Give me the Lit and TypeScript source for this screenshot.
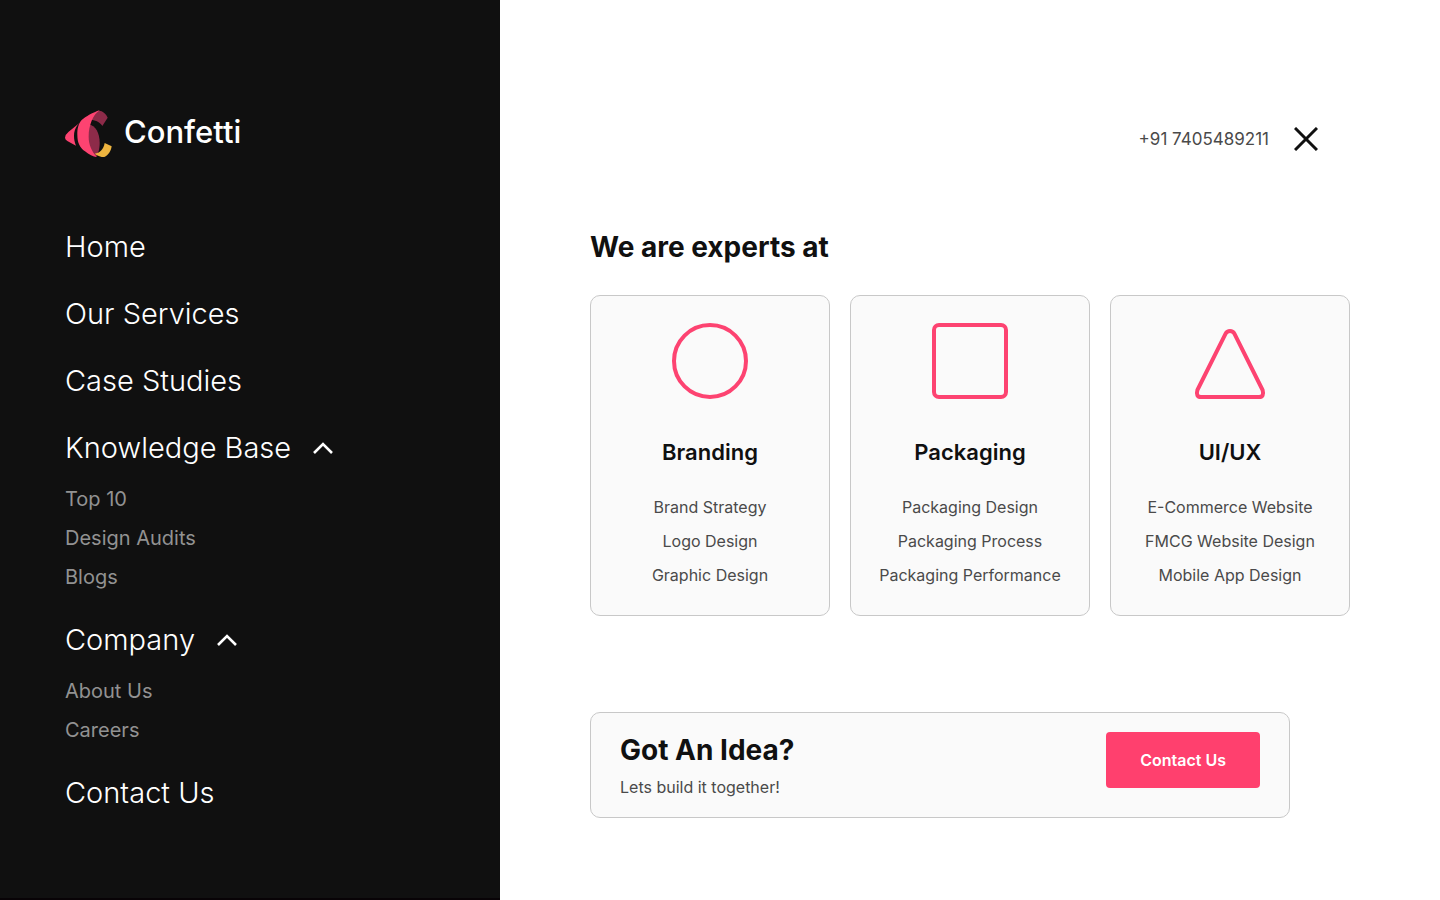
import { LitElement, html, css, svg, nothing } from "lit";
import { customElement, property, state } from "lit/decorators.js";

interface NavEntry {
  label: string;
  children?: string[];
}

const NAV: NavEntry[] = [
  { label: "Home" },
  { label: "Our Services" },
  { label: "Case Studies" },
  { label: "Knowledge Base", children: ["Top 10", "Design Audits", "Blogs"] },
  { label: "Company", children: ["About Us", "Careers"] },
  { label: "Contact Us" },
];

const SERVICES = [
  { shape: "circle", title: "Branding", items: ["Brand Strategy", "Logo Design", "Graphic Design"] },
  { shape: "square", title: "Packaging", items: ["Packaging Design", "Packaging Process", "Packaging Performance"] },
  { shape: "triangle", title: "UI/UX", items: ["E-Commerce Website", "FMCG Website Design", "Mobile App Design"] },
];

@customElement("confetti-logo")
class ConfettiLogo extends LitElement {
  static styles = css`
    :host { display: block; }
    .logo {
      display: flex;
      align-items: center;
      gap: 12px;
      color: #fff;
      text-decoration: none;
    }
    .mark { display: block; width: 47px; height: 47px; }
    .word { padding-bottom: 3px; font-size: 31px; line-height: 44px; font-weight: 500; }
  `;

  render() {
    return html`
      <a class="logo" href="#">
        <svg class="mark" viewBox="0 0 141 141" aria-hidden="true">
          <path fill="#fd4371" d="M0 83Q1 73 11 65L58 27C44 36 27 52 27 78C27 88 29 97 33 107L7 93Q0 89 0 83Z"/>
          <path fill="#8d2b49" d="M70 43C92 46 104 70 104 98C104 116 100 132 92 141C78 130 70 110 68 86Z"/>
          <path fill="#8d2b49" d="M98 3Q104 1 110 4C118 8 125 15 128 23L112 48C106 38 94 30 76 30Z"/>
          <path fill="#fd4371" d="M104 1C84 7 62 20 50 30C40 41 37 56 37 74C37 98 44 112 60 124C72 134 84 141 96 141C80 124 71 104 71 80C71 46 84 14 104 1Z"/>
          <path fill="#edb43f" d="M119 99L140 109C138 123 130 136 118 141C108 141 98 138 89 131C104 130 116 118 119 99Z"/>
        </svg>
        <span class="word">Confetti</span>
      </a>
    `;
  }
}

@customElement("side-nav")
class SideNav extends LitElement {
  @state() private closed: string[] = [];

  static styles = css`
    :host { display: block; }
    .list {
      display: flex;
      flex-direction: column;
      gap: 30px;
      margin: 0;
      padding: 0;
      list-style: none;
    }
    .main {
      display: flex;
      align-items: center;
      gap: 22px;
      width: fit-content;
      padding: 0;
      border: 0;
      background: none;
      font: 300 29px/37px Inter, "Liberation Sans", sans-serif;
      color: #fff;
      text-decoration: none;
      cursor: pointer;
    }
    .chevron { display: block; width: 20px; height: 12px; }
    .chevron.down { rotate: 180deg; }
    .sub {
      display: flex;
      flex-direction: column;
      gap: 11px;
      margin: 19px 0 0;
      padding: 0;
      list-style: none;
    }
    .sub-link {
      display: block;
      width: fit-content;
      font-size: 20px;
      line-height: 28px;
      font-weight: 400;
      color: #929292;
      text-decoration: none;
    }
  `;

  private toggle(label: string) {
    this.closed = this.closed.includes(label)
      ? this.closed.filter((l) => l !== label)
      : [...this.closed, label];
  }

  private renderEntry(entry: NavEntry) {
    if (!entry.children) {
      return html`<li><a class="main" href="#">${entry.label}</a></li>`;
    }
    const open = !this.closed.includes(entry.label);
    return html`
      <li>
        <button class="main" type="button" aria-expanded=${open} @click=${() => this.toggle(entry.label)}>
          ${entry.label}
          <svg class="chevron ${open ? "" : "down"}" viewBox="0 0 20 12" fill="none" stroke="#fff" stroke-width="2.6" aria-hidden="true">
            <path d="M1 11 10 2 19 11"/>
          </svg>
        </button>
        ${open
          ? html`<ul class="sub">
              ${entry.children.map((c) => html`<li><a class="sub-link" href="#">${c}</a></li>`)}
            </ul>`
          : nothing}
      </li>
    `;
  }

  render() {
    return html`<nav aria-label="Main"><ul class="list">${NAV.map((e) => this.renderEntry(e))}</ul></nav>`;
  }
}

@customElement("service-card")
class ServiceCard extends LitElement {
  @property() shape = "circle";
  @property() heading = "";
  @property({ attribute: false }) items: string[] = [];

  static styles = css`
    :host { display: block; }
    .card {
      box-sizing: border-box;
      height: 100%;
      padding: 25px 16px 28px;
      border: 1px solid #c8c8c8;
      border-radius: 10px;
      background: #fafafa;
      text-align: center;
    }
    .icon { display: block; width: 80px; height: 80px; margin: 0 auto; }
    .title {
      margin: 36px 0 0;
      font-size: 22px;
      line-height: 30px;
      font-weight: 600;
      color: #101010;
    }
    .items {
      display: flex;
      flex-direction: column;
      gap: 10px;
      margin: 28px 0 0;
      padding: 0;
      list-style: none;
    }
    .link {
      font-size: 16px;
      line-height: 24px;
      font-weight: 400;
      color: #4a4a4a;
      text-decoration: none;
      white-space: nowrap;
    }
    .items li { line-height: 24px; }
  `;

  private get drawing() {
    switch (this.shape) {
      case "square":
        return svg`<rect x="4" y="4" width="72" height="72" rx="5"/>`;
      case "triangle":
        return svg`<path d="M35.600 12.600Q37 10 40 10Q43 10 44.400 12.600L72.600 69Q74.500 76 69 76H11Q5.500 76 7.400 69Z"/>`;
      default:
        return svg`<circle cx="40" cy="40" r="36"/>`;
    }
  }

  render() {
    return html`
      <article class="card">
        <svg class="icon" viewBox="0 0 80 80" fill="none" stroke="#fd4371" stroke-width="4" aria-hidden="true">${this.drawing}</svg>
        <h3 class="title">${this.heading}</h3>
        <ul class="items">${this.items.map((i) => html`<li><a class="link" href="#">${i}</a></li>`)}</ul>
      </article>
    `;
  }
}

@customElement("app-root")
class AppRoot extends LitElement {
  static styles = css`
    :host {
      display: grid;
      grid-template-columns: minmax(360px, 500px) minmax(0, 1fr);
      min-height: 100vh;
      background: #fff;
      font-family: Inter, "Liberation Sans", sans-serif;
      color: #101010;
    }
    .side {
      box-sizing: border-box;
      padding: 110px 30px 60px 65px;
      border-bottom: 2px solid #080306;
      background: #101010;
    }
    .menu { margin-top: 71px; }
    .content { padding: 127px 90px 60px; }
    .top {
      display: flex;
      justify-content: flex-end;
      align-items: center;
      gap: 25px;
      padding-right: 32px;
    }
    .phone {
      font-size: 17px;
      line-height: 24px;
      color: #4a4a4a;
      text-decoration: none;
    }
    .close {
      padding: 0;
      border: 0;
      background: none;
      cursor: pointer;
    }
    .cross { display: block; width: 24px; height: 24px; }
    .heading {
      margin: 0;
      font-size: 28px;
      line-height: 36px;
      font-weight: 700;
    }
    .experts { margin-top: 78px; }
    .cards {
      display: grid;
      grid-template-columns: repeat(3, minmax(0, 1fr));
      gap: 20px;
      margin-top: 30px;
    }
    .cta {
      box-sizing: border-box;
      display: flex;
      justify-content: space-between;
      align-items: flex-start;
      max-width: 700px;
      margin-top: 96px;
      padding: 19px 29px 17px;
      border: 1px solid #c8c8c8;
      border-radius: 10px;
      background: #fafafa;
    }
    .note {
      margin: 7px 0 0;
      font-size: 16px;
      line-height: 25px;
      color: #4a4a4a;
    }
    .contact {
      padding: 16px 34px;
      border: 0;
      border-radius: 4px;
      background: #ff406e;
      font: 600 16px/24px Inter, "Liberation Sans", sans-serif;
      color: #fff;
      cursor: pointer;
    }
  `;

  render() {
    return html`
      <aside class="side">
        <confetti-logo></confetti-logo>
        <side-nav class="menu"></side-nav>
      </aside>
      <main class="content">
        <div class="top">
          <a class="phone" href="tel:+917405489211">+91 7405489211</a>
          <button class="close" type="button" aria-label="Close menu">
            <svg class="cross" viewBox="0 0 24 24" fill="none" stroke="#101010" stroke-width="3" aria-hidden="true">
              <path d="M1 1 23 23M23 1 1 23"/>
            </svg>
          </button>
        </div>
        <section class="experts">
          <h2 class="heading">We are experts at</h2>
          <div class="cards">
            ${SERVICES.map(
              (s) => html`<service-card .shape=${s.shape} .heading=${s.title} .items=${s.items}></service-card>`,
            )}
          </div>
        </section>
        <section class="cta">
          <div>
            <h2 class="heading">Got An Idea?</h2>
            <p class="note">Lets build it together!</p>
          </div>
          <button class="contact" type="button">Contact Us</button>
        </section>
      </main>
    `;
  }
}
